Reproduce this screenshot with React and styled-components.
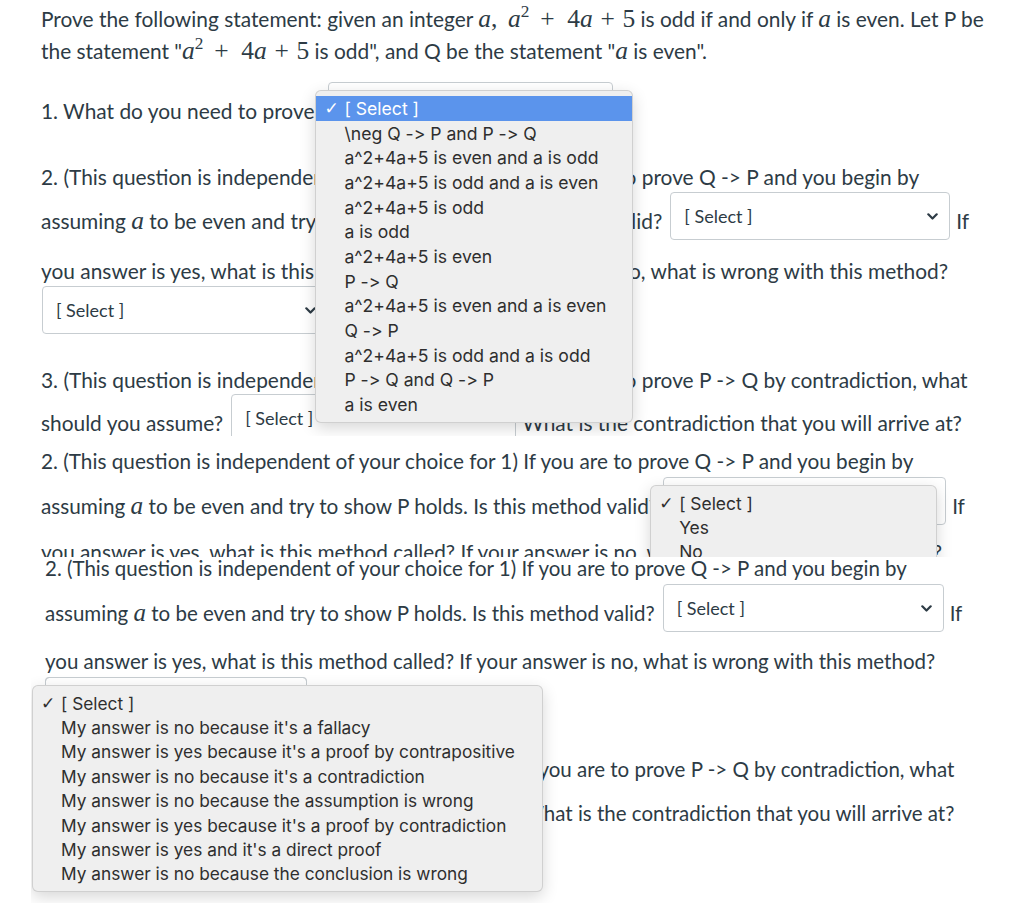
import React from "react";
import styled, { createGlobalStyle } from "styled-components";

const GlobalStyle = createGlobalStyle`
  html, body { margin: 0; padding: 0; background: #ffffff; }
  body { font-family: Lato, "Noto Sans", sans-serif; color: #2d3b45; -webkit-font-smoothing: antialiased; }
  * { box-sizing: border-box; }
`;

const Page = styled.main`
  display: flex;
  flex-direction: column;
  width: 1024px;
  height: 903px;
  overflow: hidden;
  background: #fff;
`;

const Shot = styled.section`
  position: relative;
  flex: none;
  display: flex;
  flex-direction: column;
  height: ${(p) => p.$h}px;
  margin-left: ${(p) => p.$x || 0}px;
  padding: ${(p) => p.$top || 0}px 0 0 ${(p) => p.$pad}px;
  font-size: ${(p) => p.$fs}px;
  overflow: hidden;
  background: #fff;
`;

const Line = styled.div`
  display: flex;
  flex: none;
  align-items: center;
  height: ${(p) => p.$h || 32}px;
  margin-top: ${(p) => p.$mt || 0}px;
  white-space: nowrap;
`;

const Txt = styled.span`
  white-space: nowrap;
  padding-top: ${(p) => (p.$low ? 9 : 0)}px;
`;

const M = styled.span`
  font-family: "Liberation Serif", "DejaVu Serif", serif;
  font-size: 1.22em;
  line-height: 1;
  white-space: nowrap;
`;

const V = styled.i`
  font-style: italic;
`;

const Sup = styled.sup`
  font-size: 0.68em;
  vertical-align: 0.55em;
  line-height: 0;
  font-style: normal;
`;

const Op = styled.span`
  display: inline-block;
  margin: 0 ${(p) => p.$r}em 0 ${(p) => p.$l}em;
`;

const SelectBox = styled.span`
  position: relative;
  flex: none;
  display: inline-flex;
  align-items: center;
  justify-content: space-between;
  width: ${(p) => p.$w}px;
  height: 48px;
  margin: 0 ${(p) => p.$mr ?? 6}px 0 ${(p) => p.$ml ?? 8}px;
  padding: 0 11px 0 13px;
  background: #fff;
  border: 1px solid #c7cdd1;
  border-radius: 4px;
  font-size: 18px;
  color: #2d3b45;
`;

const Ghost = styled.span`
  position: absolute;
  top: -1px;
  left: -1px;
  right: -1px;
  height: ${(p) => p.$h}px;
  border: 1px solid #c7cdd1;
  border-radius: 4px;
  pointer-events: none;
`;

const Menu = styled.div`
  position: absolute;
  z-index: 5;
  left: -14px;
  top: 7px;
  width: ${(p) => p.$w}px;
  padding: 5px 0;
  background: #efefef;
  border: 1px solid rgba(0, 0, 0, 0.13);
  border-radius: 6px;
  box-shadow: 0 5px 16px rgba(0, 0, 0, 0.16);
  font-family: Inter, "Liberation Sans", sans-serif;
  font-feature-settings: "calt" 0, "liga" 0;
  font-size: ${(p) => p.$fs}px;
  color: #2e2e2e;
`;

const Option = styled.div`
  display: flex;
  align-items: center;
  height: ${(p) => p.$rh}px;
  padding-left: 8px;
  background: ${(p) => (p.$hl ? "#5b94ec" : "transparent")};
  color: ${(p) => (p.$hl ? "#ffffff" : "inherit")};
`;

const Check = styled.span`
  flex: none;
  width: 20px;
  font-family: "DejaVu Sans", sans-serif;
  font-size: 17px;
  line-height: 1;
`;

const Chevron = () => (
  <svg width="11" height="7" viewBox="0 0 11 7" aria-hidden="true">
    <path
      d="M1.3 1.3 L5.5 5.5 L9.7 1.3"
      fill="none"
      stroke="#2d3b45"
      strokeWidth="2.2"
      strokeLinecap="round"
      strokeLinejoin="round"
    />
  </svg>
);

const Select = ({ w, ml, mr, options, hl, menuW, menuFs = 17.3, rh = 24.6, ghost }) => (
  <SelectBox $w={w} $ml={ml} $mr={mr}>
    <span>[ Select ]</span>
    <Chevron />
    {ghost && <Ghost $h={ghost} />}
    {options && (
      <Menu $w={menuW} $fs={menuFs}>
        {options.map((o, i) => (
          <Option key={i} $hl={hl && i === 0} $rh={rh}>
            <Check>{i === 0 ? "✓" : ""}</Check>
            {o}
          </Option>
        ))}
      </Menu>
    )}
  </SelectBox>
);

const A = () => (
  <M>
    <V>a</V>
  </M>
);

const Poly = () => (
  <M>
    <V>a</V>
    <Sup>2</Sup>
    <Op $l={0.42} $r={0.5}>+</Op>
    4<V>a</V>
    <Op $l={0.3} $r={0.3}>+</Op>5
  </M>
);

const menu1 = [
  "[ Select ]",
  "\\neg Q -> P and P -> Q",
  "a^2+4a+5 is even and a is odd",
  "a^2+4a+5 is odd and a is even",
  "a^2+4a+5 is odd",
  "a is odd",
  "a^2+4a+5 is even",
  "P -> Q",
  "a^2+4a+5 is even and a is even",
  "Q -> P",
  "a^2+4a+5 is odd and a is odd",
  "P -> Q and Q -> P",
  "a is even",
];

const menu2 = ["[ Select ]", "Yes", "No"];

const menu3 = [
  "[ Select ]",
  "My answer is no because it's a fallacy",
  "My answer is yes because it's a proof by contrapositive",
  "My answer is no because it's a contradiction",
  "My answer is no because the assumption is wrong",
  "My answer is yes because it's a proof by contradiction",
  "My answer is yes and it's a direct proof",
  "My answer is no because the conclusion is wrong",
];

const Q2a = "2. (This question is independent of your choice for 1) If you are to prove Q -> P and you begin by";
const Q2c = "you answer is yes, what is this method called? If your answer is no, what is wrong with this method?";
const Q3a = "3. (This question is independent of your choice for 1) If you are to prove P -> Q by contradiction, what";

const Assuming = () => (
  <Txt $low>
    assuming <A /> to be even and try to show P holds. Is this method valid?
  </Txt>
);

export default function App() {
  return (
    <>
      <GlobalStyle />
      <Page>
        <Shot $h={436} $pad={41} $top={3} $fs={20.9}>
          <Line $h={32}>
            <Txt>
              Prove the following statement: given an integer <A />
              <M>,</M>&nbsp; <Poly /> is odd if and only if <A /> is even. Let P be
            </Txt>
          </Line>
          <Line $h={32}>
            <Txt>
              the statement "<Poly /> is odd", and Q be the statement "<A /> is even".
            </Txt>
          </Line>
          <Line $h={48} $mt={15}>
            <Txt $low>1. What do you need to prove</Txt>
            <Select w={285} ml={14} options={menu1} hl menuW={318} menuFs={17.6} rh={24.7} />
          </Line>
          <Line $h={32} $mt={30}>
            <Txt>{Q2a}</Txt>
          </Line>
          <Line $h={48}>
            <Assuming />
            <Select w={280} />
            <Txt $low>If</Txt>
          </Line>
          <Line $h={32} $mt={14}>
            <Txt>{Q2c}</Txt>
          </Line>
          <Line $h={48} $mt={0}>
            <Select w={286} ml={1} />
          </Line>
          <Line $h={32} $mt={29}>
            <Txt>{Q3a}</Txt>
          </Line>
          <Line $h={48} $mt={-1}>
            <Txt $low>should you assume?</Txt>
            <Select w={285} />
            <Txt $low>What is the contradiction that you will arrive at?</Txt>
          </Line>
        </Shot>

        <Shot $h={121} $pad={41} $top={9} $fs={20.75}>
          <Line $h={32}>
            <Txt>{Q2a}</Txt>
          </Line>
          <Line $h={48} $mt={0}>
            <Assuming />
            <Select w={283} ml={5} options={menu2} menuW={287} menuFs={17.4} rh={24.3} />
            <Txt $low>If</Txt>
          </Line>
          <Line $h={32} $mt={11}>
            <Txt>{Q2c}</Txt>
          </Line>
        </Shot>

        <Shot $h={346} $pad={14} $x={31} $top={0} $fs={20.5}>
          <Line $h={22}>
            <Txt>{Q2a}</Txt>
          </Line>
          <Line $h={48} $mt={5}>
            <Assuming />
            <Select w={281} />
            <Txt $low>If</Txt>
          </Line>
          <Line $h={32} $mt={13}>
            <Txt>{Q2c}</Txt>
          </Line>
          <Line $h={48}>
            <Select w={262} ml={0} options={menu3} menuW={511} menuFs={17.3} rh={24.4} ghost={215} />
          </Line>
          <Line $h={32} $mt={28}>
            <Txt>{Q3a}</Txt>
          </Line>
          <Line $h={48} $mt={-1}>
            <Txt $low>should you assume?</Txt>
            <Select w={285} />
            <Txt $low>What is the contradiction that you will arrive at?</Txt>
          </Line>
        </Shot>
      </Page>
    </>
  );
}
